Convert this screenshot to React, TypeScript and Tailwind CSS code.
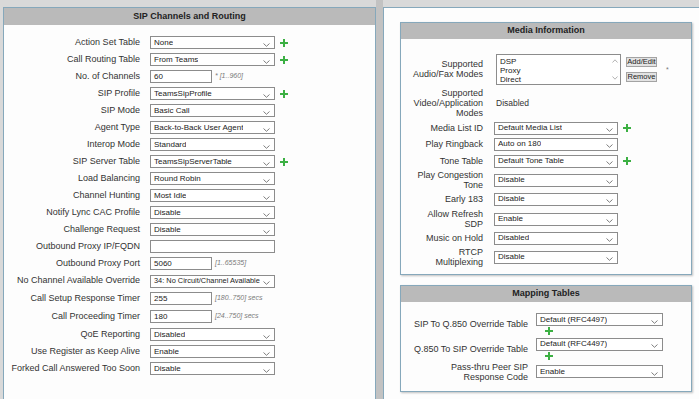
import React from 'react';

const font = { fontFamily: '"Liberation Sans", Arial, sans-serif' };

const Plus = () => (
    <svg width="8" height="8" viewBox="0 0 8 8" className="shrink-0">
        <path d="M3 0h2v3h3v2H5v3H3V5H0V3h3z" fill="#3cb043" />
    </svg>
);

const Chevron = () => (
    <svg width="7" height="4" viewBox="0 0 7 4" className="mt-[4px] shrink-0">
        <path d="M0.5 0.5L3.5 3.3L6.5 0.5" stroke="#6f6f6f" strokeWidth="0.9" fill="none" />
    </svg>
);

interface SelectProps {
    value: string;
    width?: string;
    small?: boolean;
}

const Select: React.FC<SelectProps> = ({ value, width = 'w-[125px]', small }) => (
    <div className={`${width} flex h-[13px] shrink-0 items-center justify-between border border-[#8c8c8c] bg-white pl-[3px] pr-[4px]`}>
        <span className={`${small ? 'text-[7.4px]' : 'text-[8px]'} overflow-hidden whitespace-nowrap leading-none text-[#222]`}>{value}</span>
        <Chevron />
    </div>
);

const Input: React.FC<{ value?: string; wide?: boolean }> = ({ value = '', wide }) => (
    <div className={`${wide ? 'w-[125px]' : 'w-[62px]'} flex h-[13px] shrink-0 items-center border border-[#8c8c8c] bg-white pl-[3px]`}>
        <span className="text-[8px] leading-none text-[#222]">{value}</span>
    </div>
);

const Hint: React.FC<{ text: string }> = ({ text }) => (
    <span className="ml-[3px] text-[7px] italic text-[#7a7a7a]">{text}</span>
);

type Row = { label: string; control: React.ReactNode; h?: string };

const leftRows: Row[] = [
    { label: 'Action Set Table', control: <><Select value="None" /><span className="ml-[5px]"><Plus /></span></> },
    { label: 'Call Routing Table', control: <><Select value="From Teams" /><span className="ml-[5px]"><Plus /></span></> },
    { label: 'No. of Channels', control: <><Input value="60" /><Hint text="* [1..960]" /></> },
    { label: 'SIP Profile', control: <><Select value="TeamsSipProfile" /><span className="ml-[5px]"><Plus /></span></> },
    { label: 'SIP Mode', control: <Select value="Basic Call" /> },
    { label: 'Agent Type', control: <Select value="Back-to-Back User Agent" /> },
    { label: 'Interop Mode', control: <Select value="Standard" /> },
    { label: 'SIP Server Table', control: <><Select value="TeamsSipServerTable" /><span className="ml-[5px]"><Plus /></span></> },
    { label: 'Load Balancing', control: <Select value="Round Robin" /> },
    { label: 'Channel Hunting', control: <Select value="Most Idle" /> },
    { label: 'Notify Lync CAC Profile', control: <Select value="Disable" /> },
    { label: 'Challenge Request', control: <Select value="Disable" /> },
    { label: 'Outbound Proxy IP/FQDN', control: <Input wide /> },
    { label: 'Outbound Proxy Port', control: <><Input value="5060" /><Hint text="[1..65535]" /></> },
    { label: 'No Channel Available Override', control: <Select value="34: No Circuit/Channel Available" small />, h: 'h-[18px]' },
    { label: 'Call Setup Response Timer', control: <><Input value="255" /><Hint text="[180..750] secs" /></> },
    { label: 'Call Proceeding Timer', control: <><Input value="180" /><Hint text="[24..750] secs" /></>, h: 'h-[19px]' },
    { label: 'QoE Reporting', control: <Select value="Disabled" /> },
    { label: 'Use Register as Keep Alive', control: <Select value="Enable" /> },
    { label: 'Forked Call Answered Too Soon', control: <Select value="Disable" /> },
];

const Panel: React.FC<{ title: string; className?: string; children: React.ReactNode }> = ({ title, className = '', children }) => (
    <div className={`border border-[#86a8bb] bg-[#fdfdfd] shadow-[1px_1px_2px_rgba(0,0,0,0.25)] ${className}`}>
        <div className="flex h-[16px] items-center justify-center bg-[#bababa] text-[9px] font-bold text-[#222]">
            {title}
        </div>
        {children}
    </div>
);

const MediaLabel: React.FC<{ lines: string[] }> = ({ lines }) => (
    <div className="w-[82px] shrink-0 text-right text-[9px] leading-[10px] text-[#333]">
        {lines.map((l) => (
            <div key={l}>{l}</div>
        ))}
    </div>
);

const MediaRow: React.FC<{ lines: string[]; h: string; children: React.ReactNode }> = ({ lines, h, children }) => (
    <div className={`flex items-center ${h}`}>
        <MediaLabel lines={lines} />
        <div className="ml-[11px] flex items-center">{children}</div>
    </div>
);

const SmallButton: React.FC<{ label: string }> = ({ label }) => (
    <div className="flex h-[10px] w-[31px] items-center justify-center border border-[#a3a3a3] bg-[#e3e3e3] text-[7.5px] leading-none text-[#222]">
        {label}
    </div>
);

const MapRow: React.FC<{ lines: string[]; h: string; plus?: boolean; value: string }> = ({ lines, h, plus, value }) => (
    <div className={`flex items-center ${h}`}>
        <div className="w-[127px] shrink-0 text-right text-[9px] leading-[10px] text-[#333]">
            {lines.map((l) => (
                <div key={l}>{l}</div>
            ))}
        </div>
        <div className="ml-[8px] flex flex-col">
            <Select value={value} width="w-[127px]" />
            {plus && (
                <span className="ml-[9px] mt-[1px]">
                    <Plus />
                </span>
            )}
        </div>
    </div>
);

export default function App() {
    return (
        <div className="flex h-[399px] w-[699px] overflow-hidden bg-[#d9d9d9]" style={font}>
            {/* left panel */}
            <div className="ml-[3px] mt-[7px] h-[400px] w-[373px] shrink-0 border border-[#86a8bb] bg-[#fdfdfd]">
                <div className="flex h-[17px] items-center justify-center bg-[#bababa] text-[9px] font-bold text-[#222]">
                    SIP Channels and Routing
                </div>
                <div className="pt-[9px]">
                    {leftRows.map((r) => (
                        <div key={r.label} className={`flex items-center ${r.h ?? 'h-[17px]'}`}>
                            <div className="w-[136px] shrink-0 text-right text-[9px] text-[#333]">{r.label}</div>
                            <div className="ml-[10px] flex items-center">{r.control}</div>
                        </div>
                    ))}
                </div>
            </div>

            {/* divider strip */}
            <div className="w-[7px] shrink-0 bg-[#c2c2c2]" />

            {/* right container */}
            <div className="mt-[7px] flex-1 border-l border-t border-[#86a8bb] bg-[#fdfdfd] pl-[16px] pt-[14px]">
                <Panel title="Media Information" className="w-[292px]">
                    <div className="pt-[13px] pb-[6px]">
                        <MediaRow lines={['Supported', 'Audio/Fax Modes']} h="h-[34px]">
                            <div className="ml-[2px] flex h-[31px] w-[125px] border border-[#8c8c8c] bg-white">
                                <div className="flex-1 pl-[3px] pt-[2px] text-[8px] leading-[9px] text-[#222]">
                                    <div>DSP</div>
                                    <div>Proxy</div>
                                    <div>Direct</div>
                                </div>
                                <div className="flex w-[10px] flex-col items-center justify-between py-[4px]">
                                    <svg width="6" height="4" viewBox="0 0 6 4">
                                        <path d="M0.5 3.5L3 0.8L5.5 3.5" stroke="#aaa" strokeWidth="0.9" fill="none" />
                                    </svg>
                                    <svg width="6" height="4" viewBox="0 0 6 4">
                                        <path d="M0.5 0.5L3 3.2L5.5 0.5" stroke="#aaa" strokeWidth="0.9" fill="none" />
                                    </svg>
                                </div>
                            </div>
                            <div className="ml-[5px] flex flex-col gap-[5px]">
                                <SmallButton label="Add/Edit" />
                                <SmallButton label="Remove" />
                            </div>
                            <span className="ml-[9px] mt-[2px] text-[7px] text-[#777]">*</span>
                        </MediaRow>
                        <MediaRow lines={['Supported', 'Video/Application', 'Modes']} h="h-[34px]">
                            <span className="ml-[2px] text-[8.5px] text-[#333]">Disabled</span>
                        </MediaRow>
                        <MediaRow lines={['Media List ID']} h="h-[16px]">
                            <Select value="Default Media List" width="w-[124px]" />
                            <span className="ml-[5px]"><Plus /></span>
                        </MediaRow>
                        <MediaRow lines={['Play Ringback']} h="h-[16px]">
                            <Select value="Auto on 180" width="w-[124px]" />
                        </MediaRow>
                        <MediaRow lines={['Tone Table']} h="h-[18px]">
                            <Select value="Default Tone Table" width="w-[124px]" />
                            <span className="ml-[5px]"><Plus /></span>
                        </MediaRow>
                        <MediaRow lines={['Play Congestion', 'Tone']} h="h-[20px]">
                            <Select value="Disable" width="w-[124px]" />
                        </MediaRow>
                        <MediaRow lines={['Early 183']} h="h-[18px]">
                            <Select value="Disable" width="w-[124px]" />
                        </MediaRow>
                        <MediaRow lines={['Allow Refresh', 'SDP']} h="h-[22px]">
                            <Select value="Enable" width="w-[124px]" />
                        </MediaRow>
                        <MediaRow lines={['Music on Hold']} h="h-[16px]">
                            <Select value="Disabled" width="w-[124px]" />
                        </MediaRow>
                        <MediaRow lines={['RTCP', 'Multiplexing']} h="h-[22px]">
                            <Select value="Disable" width="w-[124px]" />
                        </MediaRow>
                    </div>
                </Panel>

                <Panel title="Mapping Tables" className="mt-[10px] w-[292px]">
                    <div className="pt-[10px] pb-[9px]">
                        <MapRow lines={['SIP To Q.850 Override Table']} h="h-[24px]" plus value="Default (RFC4497)" />
                        <MapRow lines={['Q.850 To SIP Override Table']} h="h-[25px]" plus value="Default (RFC4497)" />
                        <MapRow lines={['Pass-thru Peer SIP', 'Response Code']} h="h-[21px]" value="Enable" />
                    </div>
                </Panel>
            </div>
        </div>
    );
}
